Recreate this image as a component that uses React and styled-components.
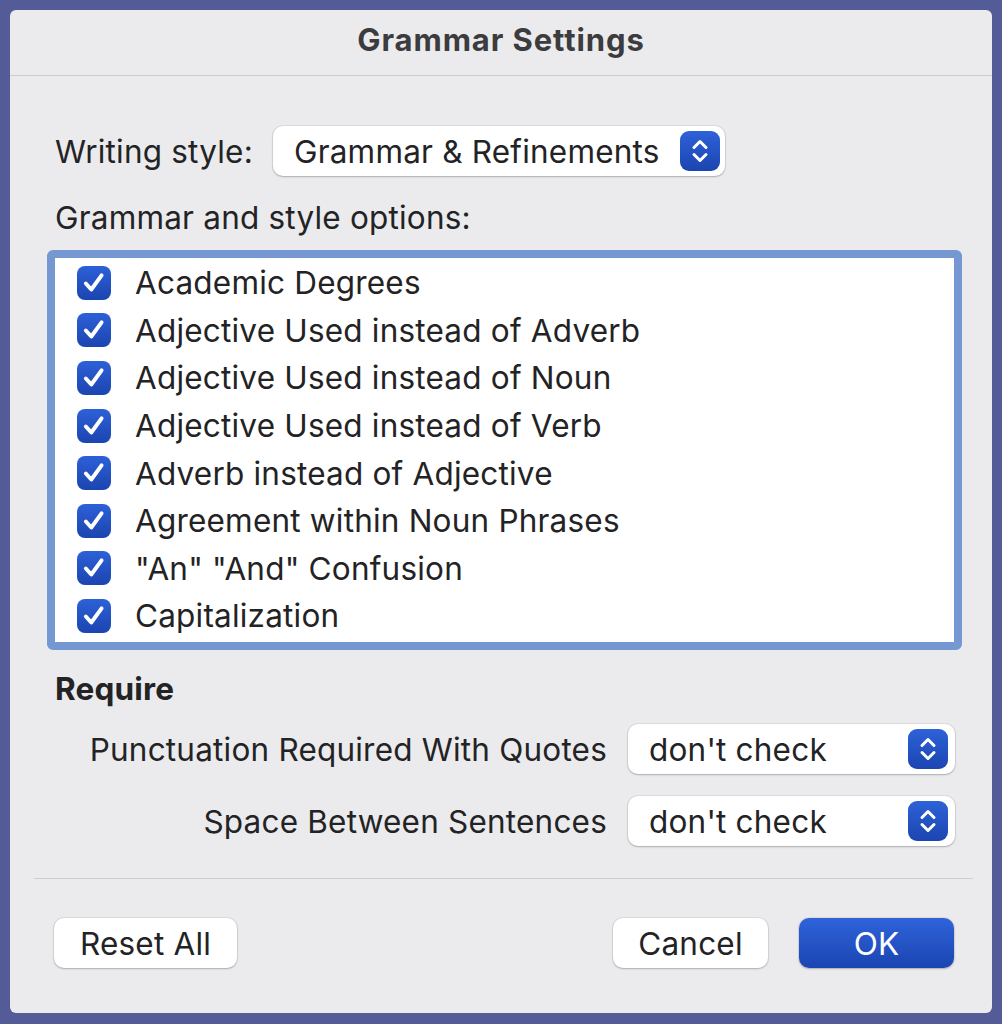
import React from 'react';
import styled, { createGlobalStyle } from 'styled-components';

const GlobalStyle = createGlobalStyle`
  html, body {
    margin: 0;
    padding: 0;
    background: #545c97;
  }
  body {
    font-family: Inter, "Liberation Sans", Arial, sans-serif;
    -webkit-font-smoothing: antialiased;
  }
`;

//Outer frame
const Frame = styled.div`
  width: 1002px;
  height: 1024px;
  box-sizing: border-box;
  padding: 10px 10px 11px 10px;
  background: #545c97;
`;

const Dialog = styled.div`
  height: 100%;
  background: #ebebed;
  border-radius: 6px;
  display: flex;
  flex-direction: column;
  color: #232325;
  font-size: 31.5px;
  letter-spacing: 0.2px;
`;

const TitleBar = styled.div`
  height: 66px;
  border-bottom: 1px solid #cdcdcf;
  display: flex;
  align-items: center;
  justify-content: center;
  padding-bottom: 7px;
  box-sizing: border-box;
`;

const Title = styled.h1`
  margin: 0;
  font-size: 31px;
  font-weight: 700;
  letter-spacing: 0.9px;
  color: #3c3c3e;
`;

const Body = styled.div`
  padding: 0 37px 0 45px;
  display: flex;
  flex-direction: column;
`;

const StyleRow = styled.div`
  margin-top: 50px;
  display: flex;
  align-items: center;
  gap: 20px;
`;

const Label = styled.span`
  white-space: nowrap;
`;

const Popup = styled.div`
  height: 50px;
  width: ${(p) => p.$width}px;
  box-sizing: border-box;
  background: #fff;
  border-radius: 10px;
  box-shadow: 0 0 0 1px rgba(0, 0, 0, 0.06), 0 1px 2px rgba(0, 0, 0, 0.22);
  display: flex;
  align-items: center;
  justify-content: space-between;
  padding: 0 ${(p) => p.$pad || 5}px 0 21px;
  white-space: nowrap;
`;

const Stepper = styled.span`
  width: 40px;
  height: 40px;
  border-radius: 9px;
  background: linear-gradient(#2e62d8, #1b45b0);
  display: flex;
  align-items: center;
  justify-content: center;
  flex-shrink: 0;
`;

const SectionLabel = styled.div`
  margin-top: 22px;
`;

const ListBox = styled.div`
  margin: 13px 0 0 -8px;
  width: 915px;
  height: 400px;
  box-sizing: border-box;
  border: 8px solid #7698d2;
  border-radius: 6px;
  background: #fff;
  padding: 1px 0 0 22px;
`;

const OptionRow = styled.div`
  height: 47.6px;
  display: flex;
  align-items: center;
  gap: 24px;
`;

const Box = styled.span`
  width: 34px;
  height: 34px;
  border-radius: 8px;
  background: linear-gradient(#2d60d8, #1b45b0);
  display: flex;
  align-items: center;
  justify-content: center;
  flex-shrink: 0;
`;

const RequireTitle = styled.div`
  margin-top: 19px;
  font-weight: 700;
`;

const RequireGrid = styled.div`
  margin-top: 16px;
  display: grid;
  grid-template-columns: 1fr 327px;
  column-gap: 21px;
  row-gap: 22px;
  align-items: center;
`;

const RightLabel = styled.span`
  text-align: right;
  white-space: nowrap;
`;

const Separator = styled.hr`
  margin: 32px 19px 0 24px;
  border: 0;
  border-top: 1px solid #cfcfd1;
`;

const Footer = styled.div`
  margin-top: 39px;
  padding: 0 38px 0 44px;
  display: flex;
  align-items: center;
`;

const Button = styled.button`
  height: 50px;
  width: ${(p) => p.$width}px;
  border: none;
  border-radius: 10px;
  font-family: inherit;
  font-size: inherit;
  letter-spacing: inherit;
  color: ${(p) => (p.$primary ? '#fff' : '#232325')};
  background: ${(p) => (p.$primary ? 'linear-gradient(#2f63da, #1a45b2)' : '#fff')};
  box-shadow: 0 0 0 1px rgba(0, 0, 0, 0.06), 0 1px 2px rgba(0, 0, 0, 0.22);
  margin-left: ${(p) => p.$ml || 0}px;
  padding: 0;
`;

const Spacer = styled.div`
  flex: 1;
`;

function Chevrons() {
  return (
    <svg width="22" height="30" viewBox="0 0 22 30" fill="none">
      <path d="M5 11.5 L11 5.5 L17 11.5" stroke="#fff" strokeWidth="3" strokeLinecap="round" strokeLinejoin="round" />
      <path d="M5 18.5 L11 24.5 L17 18.5" stroke="#fff" strokeWidth="3" strokeLinecap="round" strokeLinejoin="round" />
    </svg>
  );
}

function Check() {
  return (
    <svg width="26" height="26" viewBox="0 0 24 24" fill="none">
      <path d="M4.5 12.5 L9.5 18 L19 5" stroke="#fff" strokeWidth="3.6" strokeLinecap="round" strokeLinejoin="round" />
    </svg>
  );
}

const options = [
  'Academic Degrees',
  'Adjective Used instead of Adverb',
  'Adjective Used instead of Noun',
  'Adjective Used instead of Verb',
  'Adverb instead of Adjective',
  'Agreement within Noun Phrases',
  '"An" "And" Confusion',
  'Capitalization',
];

export default function App() {
  return (
    <Frame>
      <GlobalStyle />
      <Dialog>
        <TitleBar>
          <Title>Grammar Settings</Title>
        </TitleBar>
        <Body>
          <StyleRow>
            <Label>Writing style:</Label>
            <Popup $width={452}>
              Grammar &amp; Refinements
              <Stepper><Chevrons /></Stepper>
            </Popup>
          </StyleRow>
          <SectionLabel>Grammar and style options:</SectionLabel>
          <ListBox>
            {options.map((o) => (
              <OptionRow key={o}>
                <Box><Check /></Box>
                {o}
              </OptionRow>
            ))}
          </ListBox>
          <RequireTitle>Require</RequireTitle>
          <RequireGrid>
            <RightLabel>Punctuation Required With Quotes</RightLabel>
            <Popup $width={327} $pad={7}>
              don't check
              <Stepper><Chevrons /></Stepper>
            </Popup>
            <RightLabel>Space Between Sentences</RightLabel>
            <Popup $width={327} $pad={7}>
              don't check
              <Stepper><Chevrons /></Stepper>
            </Popup>
          </RequireGrid>
        </Body>
        <Separator />
        <Footer>
          <Button $width={183}>Reset All</Button>
          <Spacer />
          <Button $width={155}>Cancel</Button>
          <Button $width={155} $ml={31} $primary>OK</Button>
        </Footer>
      </Dialog>
    </Frame>
  );
}
